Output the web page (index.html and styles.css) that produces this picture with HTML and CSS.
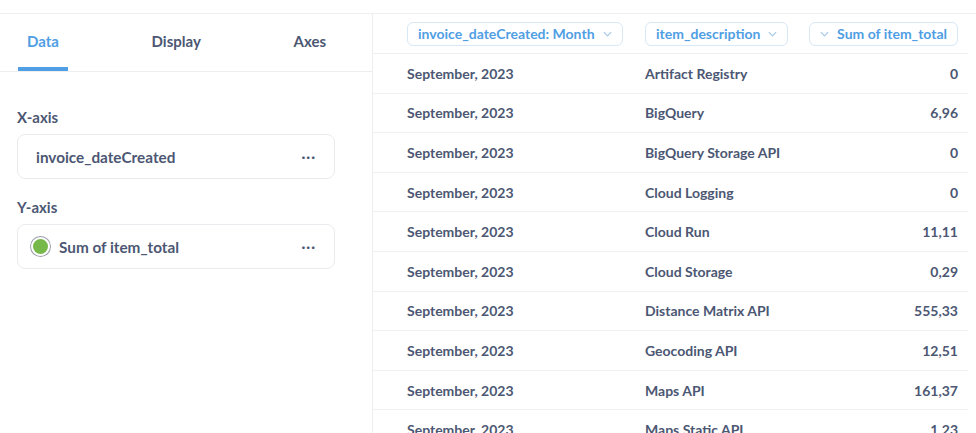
FILE: index.html
```html
<!DOCTYPE html>
<html lang="en">
<head>
  <meta charset="UTF-8" />
  <title>Question editor</title>
  <link rel="stylesheet" href="styles.css">
</head>
<body>
  <div class="topbar"></div>
  <div class="main">
    <aside class="sidebar">
      <nav class="tabs">
        <div class="tab active">Data</div>
        <div class="tab">Display</div>
        <div class="tab">Axes</div>
      </nav>
      <div class="section">
        <div class="label">X-axis</div>
        <div class="card">
          <span class="card-name">invoice_dateCreated</span>
          <span class="more">&middot;&middot;&middot;</span>
        </div>
        <div class="label">Y-axis</div>
        <div class="card">
          <span class="dot"></span>
          <span class="card-name">Sum of item_total</span>
          <span class="more">&middot;&middot;&middot;</span>
        </div>
      </div>
    </aside>

    <section class="table">
      <div class="row head">
        <div><span class="pill">invoice_dateCreated: Month <svg class="chev" viewBox="0 0 10 6"><path d="M1 1l4 4 4-4"/></svg></span></div>
        <div><span class="pill">item_description <svg class="chev" viewBox="0 0 10 6"><path d="M1 1l4 4 4-4"/></svg></span></div>
        <div><span class="pill"><svg class="chev" viewBox="0 0 10 6"><path d="M1 1l4 4 4-4"/></svg> Sum of item_total</span></div>
      </div>
      <div id="rows"></div>
    </section>
  </div>

  <script>
    const data = [
      ['Artifact Registry', '0'],
      ['BigQuery', '6,96'],
      ['BigQuery Storage API', '0'],
      ['Cloud Logging', '0'],
      ['Cloud Run', '11,11'],
      ['Cloud Storage', '0,29'],
      ['Distance Matrix API', '555,33'],
      ['Geocoding API', '12,51'],
      ['Maps API', '161,37'],
      ['Maps Static API', '1,23']
    ];
    const rows = document.getElementById('rows');
    data.forEach(d => {
      const row = document.createElement('div');
      row.className = 'row';
      row.innerHTML = '<div>September, 2023</div><div>' + d[0] + '</div><div class="num">' + d[1] + '</div>';
      rows.appendChild(row);
    });
  </script>
</body>
</html>
```

FILE: styles.css
```css
* { box-sizing: border-box; }
html, body { height: 433px; }
body { margin: 0; overflow: hidden; background: #fff; font-family: Lato, "Noto Sans", sans-serif; font-weight: 700; color: #4c5773; }
.topbar { height: 14px; border-bottom: 1px solid #eceef0; }
.main { display: flex; height: 419px; overflow: hidden; }

.sidebar { width: 373px; flex: none; border-right: 1px solid #eceef0; }
.tabs { display: flex; justify-content: space-between; height: 58px; padding: 0 37px 0 18px; border-bottom: 1px solid #eceef0; }
.tab { display: flex; align-items: center; padding: 0 9px; font-size: 15px; border-bottom: 4px solid transparent; }
.tab.active { color: #509ee3; border-bottom-color: #509ee3; }
.section { padding: 35px 37px 0 17px; }
.label { font-size: 15px; line-height: 20px; margin-bottom: 7px; }
.card { display: flex; align-items: center; height: 45px; padding: 0 18px; border: 1px solid #e9ebee; border-radius: 8px; margin-bottom: 18px; font-size: 15.3px; }
.card:last-child { margin-bottom: 0; }
.card-name { flex: 1; }
.more { font-size: 14px; letter-spacing: 1px; color: #4c5773; }
.dot { width: 19px; height: 19px; border-radius: 50%; background: #77b84a; border: 2px solid #fff; box-shadow: 0 0 0 1px #9aa0aa; margin: 0 9px 0 -5px; }

.table { flex: 1; padding-right: 8px; }
.row { display: grid; grid-template-columns: 238px 1fr auto; align-items: center; height: 39.6px; padding: 0 10px 0 34px; border-bottom: 1px solid #f0f1f3; font-size: 14px; }
.row.head { height: 40px; border-bottom-color: #eceef0; }
.num { text-align: right; }
.pill { display: inline-flex; align-items: center; gap: 8px; height: 24px; padding: 0 10px; border: 1px solid #d8e8f6; border-radius: 6px; color: #509ee3; font-size: 14px; }
.head > div:last-child { text-align: right; }
.chev { width: 9px; height: 6px; fill: none; stroke: #a6c9ea; stroke-width: 1.3; }
```
